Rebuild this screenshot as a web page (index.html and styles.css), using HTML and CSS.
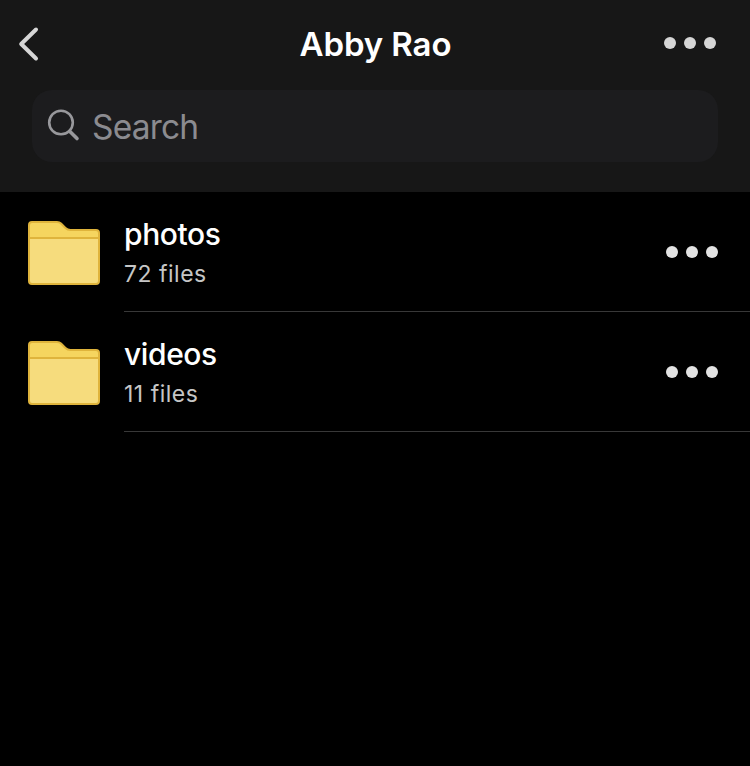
FILE: index.html
```
<!DOCTYPE html>
<html lang="en">
<head>
  <meta charset="UTF-8" />
  <title>Abby Rao</title>
  <link rel="stylesheet" href="styles.css">
</head>
<body>

  <!-- Header -->
  <header class="header">
    <div class="nav">
      <button class="back-btn" aria-label="Back">
        <svg width="24" height="36" viewBox="0 0 24 36">
          <path d="M20 3.500 L5.200 18 L20 32.500" />
        </svg>
      </button>
      <h1 class="title">Abby Rao</h1>
      <button class="more-btn" aria-label="More">
        <span></span><span></span><span></span>
      </button>
    </div>

    <label class="search">
      <svg width="34" height="34" viewBox="0 0 34 34">
        <circle cx="15" cy="13.500" r="11.800" />
        <path class="handle" d="M23.700 22.200 L31 29.500" />
      </svg>
      <input type="text" placeholder="Search" />
    </label>
  </header>

  <!-- Folder list -->
  <ul class="folders">
    <li class="folder">
      <svg class="folder-icon" width="72" height="64" viewBox="0 0 72 64">
        <path class="tab" d="M1 17 V4 Q1 1 4 1 H29 Q31.500 1 33 2.500 L37.500 7 Q39.500 9 42.500 9 H68 Q71 9 71 12 V17 Z" />
        <path class="front" d="M1 17 H71 V60 Q71 63 68 63 H4 Q1 63 1 60 Z" />
      </svg>
      <div class="info">
        <div class="text">
          <div class="name">photos</div>
          <div class="count">72 files</div>
        </div>
        <button class="more-btn" aria-label="More">
          <span></span><span></span><span></span>
        </button>
      </div>
    </li>
    <li class="folder">
      <svg class="folder-icon" width="72" height="64" viewBox="0 0 72 64">
        <path class="tab" d="M1 17 V4 Q1 1 4 1 H29 Q31.500 1 33 2.500 L37.500 7 Q39.500 9 42.500 9 H68 Q71 9 71 12 V17 Z" />
        <path class="front" d="M1 17 H71 V60 Q71 63 68 63 H4 Q1 63 1 60 Z" />
      </svg>
      <div class="info">
        <div class="text">
          <div class="name">videos</div>
          <div class="count">11 files</div>
        </div>
        <button class="more-btn" aria-label="More">
          <span></span><span></span><span></span>
        </button>
      </div>
    </li>
  </ul>

</body>
</html>
```
FILE: styles.css
```
* {
  box-sizing: border-box;
}
body {
  margin: 0;
  min-height: 100vh;
  font-family: Inter, "Liberation Sans", sans-serif;
  background-color: #000;
  color: #fff;
}
button {
  padding: 0;
  border: none;
  background: none;
  cursor: pointer;
}

/* header */
.header {
  height: 192px;
  background-color: #171717;
}
.nav {
  display: grid;
  grid-template-columns: 1fr auto 1fr;
  align-items: center;
  height: 90px;
  padding: 0 34px 2px 16px;
}
.back-btn {
  justify-self: start;
  height: 36px;
}
.back-btn svg {
  display: block;
  fill: none;
  stroke: #d6d6d6;
  stroke-width: 4;
  stroke-linecap: round;
  stroke-linejoin: round;
}
.title {
  margin: 0 0 0 19px;
  font-size: 33px;
  font-weight: 600;
  letter-spacing: -0.1px;
  line-height: 40px;
}
.more-btn {
  display: flex;
  justify-self: end;
  gap: 8px;
}
.more-btn span {
  width: 12px;
  height: 12px;
  border-radius: 50%;
  background-color: #e3e3e3;
}
.nav .more-btn {
  margin-bottom: 2px;
}
.nav .more-btn span {
  background-color: #d6d6d6;
}

/* search box */
.search {
  display: flex;
  align-items: center;
  height: 72px;
  margin: 0 32px;
  padding: 0 14px;
  border-radius: 20px;
  background-color: #1c1c1e;
}
.search svg {
  flex: none;
  fill: none;
  stroke: #98989c;
  stroke-width: 2.6;
  stroke-linecap: round;
}
.search .handle {
  stroke-width: 3.6;
}
.search input {
  flex: 1;
  height: 44px;
  margin-left: 12px;
  padding: 2px 0 0;
  border: none;
  outline: none;
  background: none;
  color: #fff;
  font-family: inherit;
  font-size: 33.5px;
  letter-spacing: -0.8px;
}
.search input::placeholder {
  color: #8b8b90;
}

/* folder list */
.folders {
  margin: 0;
  padding: 0;
  list-style: none;
}
.folder {
  display: flex;
  align-items: center;
  height: 120px;
  padding-left: 28px;
}
.folder-icon {
  margin-top: 2px;
  stroke: #dfb43c;
  stroke-width: 2;
}
.folder-icon .tab {
  fill: #f5d55f;
}
.folder-icon .front {
  fill: #f6dc7d;
}
.info {
  display: flex;
  flex: 1;
  align-items: center;
  justify-content: space-between;
  height: 120px;
  margin-left: 24px;
  padding-right: 32px;
  border-bottom: 1px solid #383838;
}
.name {
  margin-top: 4px;
  font-size: 30px;
  font-weight: 500;
  letter-spacing: -0.4px;
  line-height: 38px;
}
.count {
  margin-top: 3px;
  color: #c6c6c6;
  font-size: 23px;
  letter-spacing: 0.5px;
  line-height: 36px;
}
```
